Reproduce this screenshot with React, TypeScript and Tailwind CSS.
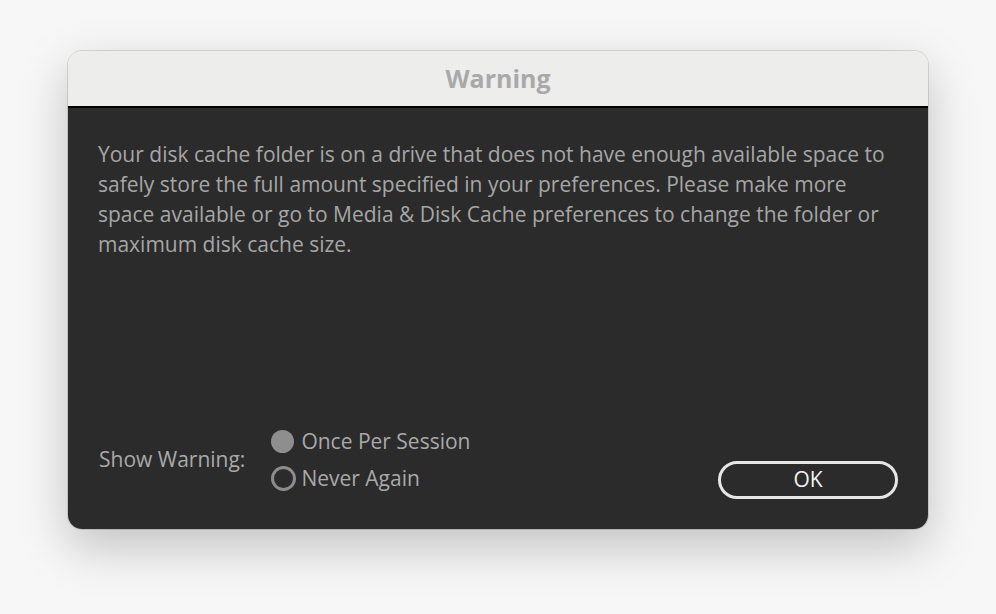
import React from "react";

function Radio({ checked, label }: { checked: boolean; label: string }) {
  return (
    <div className="flex h-[37px] items-center">
      {checked ? (
        <span className="h-[23px] w-[23px] rounded-full bg-[#8e8e8e]" />
      ) : (
        <span className="h-[25px] w-[25px] rounded-full border-[3px] border-[#8c8c8c]" />
      )}
      <span className={checked ? "ml-[7px] text-[21px] text-[#a9a9a9]" : "ml-[5px] text-[21px] text-[#a9a9a9]"}>
        {label}
      </span>
    </div>
  );
}

export default function App() {
  return (
    <div
      className="h-[614px] w-full bg-[#f7f7f7] pl-[68px] pt-[51px]"
      style={{ fontFamily: '"Open Sans", "Noto Sans", sans-serif' }}
    >
      <div className="flex h-[478px] w-[860px] flex-col overflow-hidden rounded-[14px] shadow-[0_0_0_1px_rgba(0,0,0,0.12),0_18px_50px_rgba(0,0,0,0.22)]">
        <div className="flex h-[57px] shrink-0 items-center justify-center border-b-2 border-black bg-[#ededec]">
          <span className="text-[25px] font-bold text-[#a9a9a9]">Warning</span>
        </div>
        <div className="flex flex-1 flex-col justify-between bg-[#2b2b2b] px-[30px] pb-[30px] pt-[31px]">
          <p className="whitespace-nowrap text-[21px] leading-[30px] text-[#a6a6a6]">
            Your disk cache folder is on a drive that does not have enough available space to
            <br />
            safely store the full amount specified in your preferences. Please make more
            <br />
            space available or go to Media &amp; Disk Cache preferences to change the folder or
            <br />
            maximum disk cache size.
          </p>
          <div className="flex items-end justify-between">
            <div className="mb-[2px] flex items-center">
              <span className="ml-px mr-[26px] text-[21px] text-[#a9a9a9]">Show Warning:</span>
              <div className="flex flex-col">
                <Radio checked label="Once Per Session" />
                <Radio checked={false} label="Never Again" />
              </div>
            </div>
            <button className="h-[38px] w-[180px] rounded-full border-[3px] border-[#e6e6e6] text-[21px] text-[#f2f2f2]">
              OK
            </button>
          </div>
        </div>
      </div>
    </div>
  );
}
